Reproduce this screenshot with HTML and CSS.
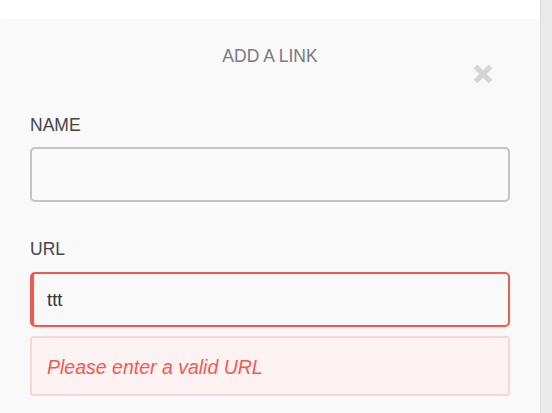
FILE: index.html
```html
<!DOCTYPE html>
<html>
<head>
<meta charset="utf-8">
<link rel="stylesheet" href="styles.css">
</head>
<body>
<div class="page">
  <div class="main">
    <div class="topbar"></div>
    <div class="panel">
      <h2 class="title">ADD A LINK</h2>
      <button class="close" aria-label="Close">
        <svg width="20" height="20" viewBox="0 0 20 20"><path d="M2.5 2.5 L17.5 17.5 M17.5 2.5 L2.5 17.5" stroke="#d4d4d4" stroke-width="5.2" stroke-linecap="butt" fill="none"/></svg>
      </button>
      <label class="label label-name">NAME</label>
      <input class="field" type="text" value="">
      <label class="label label-url">URL</label>
      <input class="field field-error" type="text" value="ttt">
      <div class="error">Please enter a valid URL</div>
    </div>
  </div>
  <div class="scrollbar"></div>
</div>
</body>
</html>
```
FILE: styles.css
```css
html, body {
  margin: 0;
  padding: 0;
  height: 100%;
  background: #ffffff;
  font-family: "Liberation Sans", Arial, sans-serif;
}
.page {
  display: flex;
  height: 413px;
  overflow: hidden;
}
.main {
  width: 540px;
  display: flex;
  flex-direction: column;
}
.topbar {
  height: 19px;
  background: #ffffff;
  flex: none;
}
.panel {
  position: relative;
  flex: 1;
  background: #f9f9f9;
  border-top-left-radius: 3px;
  padding: 27px 30px 0 30px;
  display: flex;
  flex-direction: column;
}
.title {
  margin: 0;
  font-size: 17.5px;
  line-height: 20px;
  font-weight: normal;
  color: #7a7a7a;
  text-align: center;
}
.close {
  position: absolute;
  top: 45px;
  right: 47px;
  width: 20px;
  height: 20px;
  padding: 0;
  border: none;
  background: none;
  display: flex;
}
.label {
  display: block;
  font-size: 17.5px;
  line-height: 20px;
  color: #454545;
  margin-bottom: 12px;
}
.label-name {
  margin-top: 49px;
}
.label-url {
  margin-top: 37px;
  margin-bottom: 13px;
}
.field {
  box-sizing: border-box;
  width: 480px;
  height: 55px;
  margin: 0;
  border: 2px solid #c3c3c3;
  border-radius: 5px;
  background: #f9f9f9;
  font-family: "Liberation Sans", Arial, sans-serif;
  font-size: 18.5px;
  color: #333333;
  padding: 0 13px;
  outline: none;
}
.field-error {
  border-color: #f25a50;
  border-left-width: 4px;
  padding-left: 13px;
}
.error {
  box-sizing: border-box;
  margin-top: 9px;
  width: 480px;
  height: 60px;
  border: 2px solid #fcd6d6;
  border-radius: 3px;
  background: #fff2f2;
  color: #f25a50;
  font-style: italic;
  font-size: 19.5px;
  line-height: 22px;
  padding: 18px 15px 0 15px;
}
.scrollbar {
  flex: 1;
  background: #ebebeb;
  border-left: 1px solid #dadada;
}
```
